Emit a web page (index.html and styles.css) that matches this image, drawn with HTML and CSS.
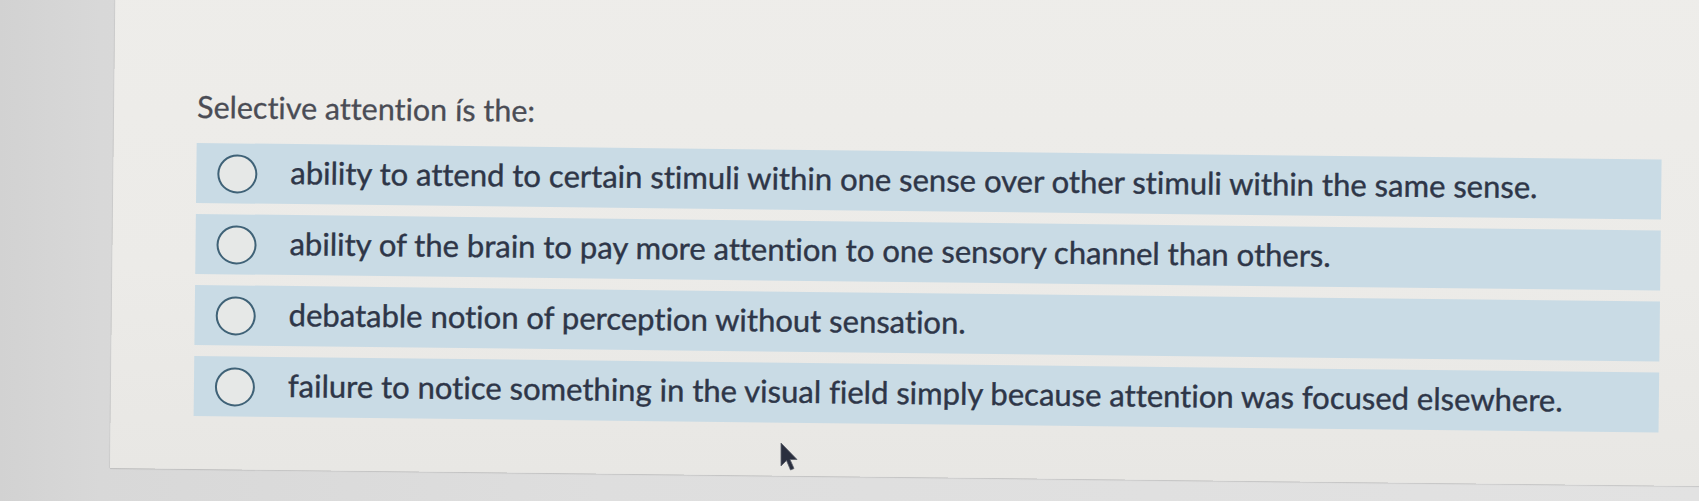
FILE: index.html
```html
<!DOCTYPE html>
<html lang="en">
<head>
<meta charset="utf-8">
<title>Selective attention</title>
<link rel="stylesheet" href="styles.css">
</head>
<body>
<div class="screen">
  <div class="panel">
    <h1 class="question">Selective attention ís the:</h1>
    <ul class="options">
      <li class="option"><span class="radio"></span><span class="label">ability to attend to certain stimuli within one sense over other stimuli within the same sense.</span></li>
      <li class="option"><span class="radio"></span><span class="label">ability of the brain to pay more attention to one sensory channel than others.</span></li>
      <li class="option"><span class="radio"></span><span class="label">debatable notion of perception without sensation.</span></li>
      <li class="option"><span class="radio"></span><span class="label">failure to notice something in the visual field simply because attention was focused elsewhere.</span></li>
    </ul>
  </div>
  <svg class="cursor" width="20" height="32" viewBox="0 0 20 32">
    <path d="M1 1 L1 24 L6.5 18.5 L10.5 28 L14 26.5 L10 17.5 L17 17.5 Z" fill="#2a2f3f" stroke="#5a5f6a" stroke-width="0.8" stroke-linejoin="round"/>
  </svg>
</div>
</body>
</html>
```

FILE: styles.css
```css
html, body {
  margin: 0;
  padding: 0;
}

body {
  background: #dadada;
  overflow: hidden;
  font-family: Lato, "Noto Sans", sans-serif;
  font-variant-ligatures: no-common-ligatures;
}

.screen {
  position: relative;
  width: 1699px;
  height: 501px;
  overflow: hidden;
  background: linear-gradient(90deg, #d2d2d2 0, #d8d8d8 100px, #dedede 600px, #e2e2e2 100%);
}

.panel {
  box-sizing: border-box;
  width: 1700px;
  height: 508px;
  margin-top: -40px;
  margin-left: 110px;
  padding: 127px 0 0 83px;
  background: linear-gradient(180deg, #eeedea 0, #ecebe8 60%, #e8e7e4 100%);
  box-shadow: 0 1px 1px rgba(0, 0, 0, 0.12), -1px 0 1px rgba(0, 0, 0, 0.05);
  transform: rotate(0.65deg);
  transform-origin: 0 100%;
}

.question {
  margin: 0;
  font-size: 30.5px;
  line-height: 36px;
  font-weight: 400;
  color: #4a4c55;
  -webkit-text-stroke: 0.3px #4a4c55;
}

.options {
  list-style: none;
  margin: 19px 0 0 0;
  padding: 0;
  width: 1465px;
  display: flex;
  flex-direction: column;
  gap: 11px;
}

.option {
  box-sizing: border-box;
  height: 60px;
  display: flex;
  align-items: center;
  background: #c9dbe5;
  padding: 0 0 4px 21px;
}

.radio {
  box-sizing: border-box;
  flex: none;
  width: 40px;
  height: 39px;
  border-radius: 50%;
  border: 2.5px solid #3f6277;
  background: #e6e8e7;
  margin: 4px 33px 0 0;
}

.label {
  font-size: 31px;
  line-height: 34px;
  color: #2e3648;
  white-space: nowrap;
  -webkit-text-stroke: 0.4px #2e3648;
}

.cursor {
  position: absolute;
  left: 780px;
  top: 442px;
}
```
